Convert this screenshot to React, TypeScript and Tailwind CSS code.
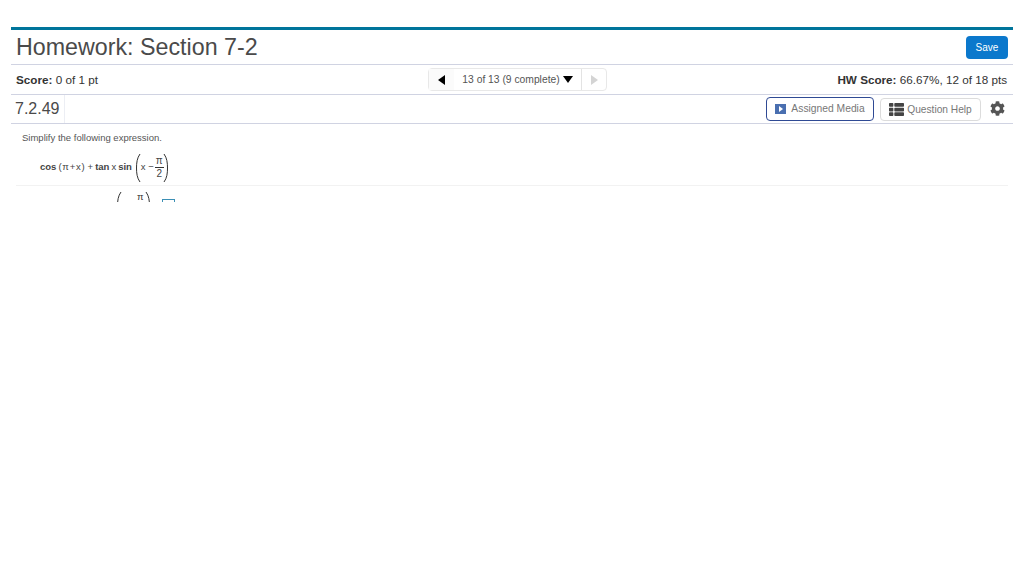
import { FaCog, FaThList } from 'react-icons/fa';

function Paren({ side, className }: { side: 'l' | 'r'; className: string }) {
  return (
    <svg viewBox="0 0 6 30" preserveAspectRatio="none" className={className} fill="none" stroke="#333" strokeWidth="1">
      <path d={side === 'l' ? 'M5 1 C2 5 1.5 10 1.5 15 C1.5 20 2 25 5 29' : 'M1 1 C4 5 4.5 10 4.5 15 C4.5 20 4 25 1 29'} />
    </svg>
  );
}

export default function App() {
  return (
    <div className="min-h-[567px] bg-white pt-[27px] px-[11px] font-['Liberation_Sans',Arial,sans-serif] text-[#333]">
      {/* Title */}
      <div className="h-[38px] border-t-[3px] border-[#00759b] border-b border-b-[#d0d3e2] flex items-center justify-between pl-[5px] pr-[5px]">
        <h1 className="pt-[2px] text-[23.25px] leading-none text-[#4a4a4a]">Homework: Section 7-2</h1>
        <button className="w-[42px] h-[23px] rounded-sm bg-[#0b78cc] text-white text-[10px] font-medium">Save</button>
      </div>

      {/* Score row */}
      <div className="h-[30px] border-b border-[#d0d3e2] grid grid-cols-[1fr_auto_1fr] items-center pl-[5px] pr-[6px] text-[11.7px]">
        <div><b>Score:</b> 0 of 1 pt</div>
        <div className="flex h-[23px] w-[179px] items-center rounded-sm border border-[#e8e8e8] ml-[12px]">
          <div className="w-[25px] h-full flex items-center justify-center bg-[#fbfbfb]">
            <span className="border-y-[5.5px] border-y-transparent border-r-[7px] border-r-black" />
          </div>
          <div className="w-[128px] h-full flex items-center justify-center gap-[3px] border-r border-[#e3e3e3] text-[10.3px] text-[#555]">
            13 of 13 (9 complete)
            <span className="border-x-[5.5px] border-x-transparent border-t-[7px] border-t-black" />
          </div>
          <div className="flex-1 flex items-center justify-center">
            <span className="border-y-[5px] border-y-transparent border-l-[7px] border-l-[#d4d4d4]" />
          </div>
        </div>
        <div className="text-right"><b>HW Score:</b> 66.67%, 12 of 18 pts</div>
      </div>

      {/* Question header */}
      <div className="h-[29px] border-b border-[#d0d3e2] flex items-center">
        <div className="w-[54px] h-full flex items-center pl-[4px] border-r border-[#eceef4] text-[16px] text-[#4a4a4a]">7.2.49</div>
        <div className="ml-auto flex items-center pr-[8px]">
          <button className="w-[108px] h-[24px] rounded-sm border border-[#2f4a94] flex items-center justify-center gap-[5px] text-[10.3px] text-[#777]">
            <span className="w-[11px] h-[10px] bg-[#4a6fb0] flex items-center justify-center">
              <span className="border-y-[3px] border-y-transparent border-l-[4px] border-l-white" />
            </span>
            Assigned Media
          </button>
          <button className="ml-[6px] w-[101px] h-[23px] rounded-sm border border-[#dcdcdc] flex items-center justify-center gap-[3px] pt-[1px] text-[10.2px] text-[#777]">
            <FaThList size={15} className="text-[#444]" />
            Question Help
          </button>
          <FaCog size={15} className="ml-[9px] -mt-[2px] text-[#555]" />
        </div>
      </div>

      {/* Question body */}
      <div className="px-[5px] h-[78px] overflow-hidden">
        <p className="mt-[8px] ml-[6px] text-[9.5px] leading-[11px] text-[#555]">Simplify the following expression.</p>
        <div className="h-[43px] border-b border-[#f2f2f2] flex items-center pl-[24px] pt-[7px] text-[9.5px] text-[#444]">
          <b>cos</b>
          <span className="ml-[2px] tracking-[0.8px]">(π+x)</span>
          <span className="ml-[2px]">+</span>
          <b className="ml-[2px]">tan</b>
          <span className="ml-[2px]">x</span>
          <b className="ml-[2px]">sin</b>
          <Paren side="l" className="ml-[3px] w-[6px] h-[30px]" />
          <span>x −</span>
          <span className="flex flex-col items-center leading-[12px] text-[10px] ml-[1px]">
            <span className="border-b border-[#333] px-[1px]">π</span>
            <span>2</span>
          </span>
          <Paren side="r" className="-ml-[1px] w-[6px] h-[30px]" />
        </div>
        <div className="flex items-start h-[16px] overflow-hidden pl-[100px] text-[9.5px] pt-[5px]">
          <Paren side="l" className="w-[6px] h-[30px]" />
          <span className="ml-[15px] leading-[11px]">π</span>
          <Paren side="r" className="ml-[1px] w-[6px] h-[30px]" />
          <span className="ml-[11px] mt-[8px] w-[13px] h-[12px] border border-[#3b8fb5]" />
        </div>
      </div>
    </div>
  );
}
